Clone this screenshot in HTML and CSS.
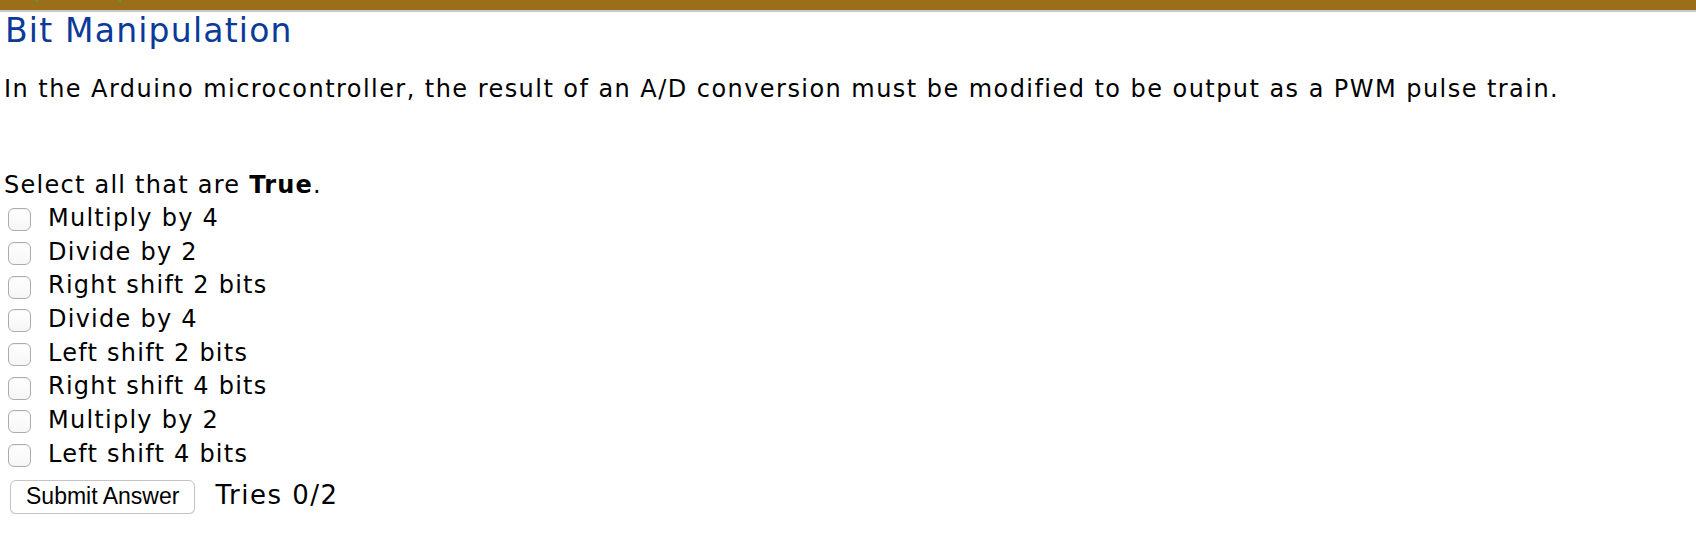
FILE: index.html
```html
<!DOCTYPE html>
<html lang="en">
<head>
  <meta charset="UTF-8">
  <title>Bit Manipulation</title>
  <link rel="stylesheet" href="styles.css">
</head>
<body>
  <div class="top-bar">
    <span class="dot dot-one"></span>
    <span class="dot dot-two"></span>
  </div>

  <div class="problem">
    <h1 class="title">Bit Manipulation</h1>
    <p class="question">In the Arduino microcontroller, the result of an A/D conversion must be modified to be output as a PWM pulse train.</p>

    <div class="prompt">Select all that are <b>True</b>.</div>
    <div class="choices">
      <label class="choice"><input type="checkbox" name="ans"> Multiply by 4</label>
      <label class="choice"><input type="checkbox" name="ans"> Divide by 2</label>
      <label class="choice"><input type="checkbox" name="ans"> Right shift 2 bits</label>
      <label class="choice"><input type="checkbox" name="ans"> Divide by 4</label>
      <label class="choice"><input type="checkbox" name="ans"> Left shift 2 bits</label>
      <label class="choice"><input type="checkbox" name="ans"> Right shift 4 bits</label>
      <label class="choice"><input type="checkbox" name="ans"> Multiply by 2</label>
      <label class="choice"><input type="checkbox" name="ans"> Left shift 4 bits</label>
    </div>

    <div class="submit-row">
      <button class="submit">Submit Answer</button>
      <span class="tries">Tries 0/2</span>
    </div>
  </div>
</body>
</html>
```

FILE: styles.css
```css
body {
  margin: 0;
  font-family: "DejaVu Sans", Verdana, sans-serif;
  color: #000;
  background: #fff;
}

.top-bar {
  height: 10px;
  background-color: #9b6f19;
  border-bottom: 2px solid #c9c9c9;
  display: flex;
}

.dot {
  width: 3px;
  height: 2px;
  background-color: #5c9a2a;
}

.dot-one {
  margin-left: 35px;
}

.dot-two {
  margin-left: 80px;
}

.problem {
  padding-left: 4px;
}

.title {
  font-size: 33px;
  font-weight: normal;
  letter-spacing: 1.2px;
  line-height: 38px;
  color: #0b3a99;
  margin: 0;
  padding-left: 1px;
}

.question {
  font-size: 24px;
  letter-spacing: 1.45px;
  line-height: 30px;
  margin: 24px 0 0 0;
}

.prompt {
  font-size: 24px;
  letter-spacing: 1.25px;
  line-height: 32px;
  margin-top: 65px;
}

.choices {
  margin-top: 1px;
}

.choice {
  display: flex;
  align-items: center;
  font-size: 24px;
  letter-spacing: 1.25px;
  line-height: 33.7px;
  height: 33.7px;
}

.choice input {
  appearance: none;
  width: 23px;
  height: 23px;
  margin: 2px 17px 0 4px;
  border: 1px solid #acacac;
  border-radius: 6px;
  background: linear-gradient(#ffffff, #f6f6f6);
  box-shadow: inset 0 1px 1px rgba(0, 0, 0, 0.05);
}

.submit-row {
  margin-top: 8px;
  display: flex;
  align-items: baseline;
}

.submit {
  font-family: "Liberation Sans", Arial, sans-serif;
  font-size: 23px;
  height: 34px;
  padding: 0 15px;
  margin-left: 6px;
  background: #fff;
  border: 1px solid #c4c4c4;
  border-radius: 6px;
  box-shadow: 0 1px 1px rgba(0, 0, 0, 0.12);
  color: #000;
}

.tries {
  font-size: 26px;
  letter-spacing: 1.5px;
  margin-left: 20px;
}
```
